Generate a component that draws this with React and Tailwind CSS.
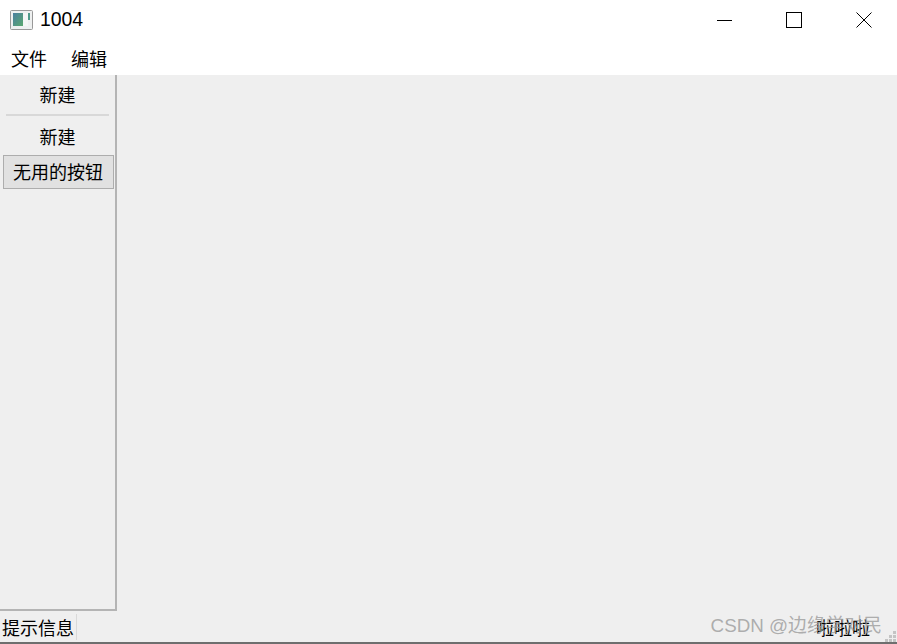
import React from "react";

const cjk = "font-['Liberation_Sans','Noto_Sans_CJK_SC',sans-serif]";

function AppIcon() {
  return (
    <svg width="23" height="20" viewBox="0 0 23 20" className="shrink-0">
      <defs>
        <linearGradient id="pane" x1="0" y1="0" x2="1" y2="1">
          <stop offset="0" stopColor="#4a7fa0" />
          <stop offset="1" stopColor="#5aa86f" />
        </linearGradient>
      </defs>
      <rect x="0.5" y="0.5" width="22" height="19" rx="1" fill="#eef0f0" stroke="#999999" />
      <rect x="3" y="3" width="10" height="13" fill="url(#pane)" />
      <rect x="18" y="3" width="2" height="7" fill="#4f9a8a" />
      <rect x="13" y="3" width="5" height="13" fill="#f4f6f5" />
    </svg>
  );
}

function TitleBar() {
  return (
    <div className="flex h-10 items-center bg-white pl-[10px]">
      <AppIcon />
      <span className="ml-[7px] text-[19.4px] text-black">1004</span>
      <div className="ml-auto flex items-center">
        <svg width="16" height="16" viewBox="0 0 16 16" className="mr-[54px]">
          <path d="M1 8.5H16" stroke="#000" fill="none" />
        </svg>
        <svg width="16" height="16" viewBox="0 0 16 16" className="mr-[54px]">
          <rect x="0.5" y="0.5" width="15" height="15" stroke="#000" fill="none" />
        </svg>
        <svg width="16" height="16" viewBox="0 0 16 16" className="mr-[25px]">
          <path d="M0.5 0.5L15.5 15.5M15.5 0.5L0.5 15.5" stroke="#000" fill="none" />
        </svg>
      </div>
    </div>
  );
}

function MenuBar() {
  return (
    <div className="flex h-[35px] items-center gap-6 bg-white pl-[11px] pt-[5px] text-[18px] text-black">
      <span>文件</span>
      <span>编辑</span>
    </div>
  );
}

function ToolBox() {
  return (
    <aside className="flex h-full w-[117px] shrink-0 flex-col items-center border-r-2 border-b-2 border-[#b4b4b4] pt-[1px] text-[18px] text-black">
      <div className="flex h-[38px] items-center pt-[3px]">新建</div>
      <div className="h-[2px] w-[103px] bg-[#d8d8d8]" />
      <div className="flex h-[39px] items-center pt-[5px]">新建</div>
      <button className="ml-[1px] h-[34px] w-[111px] border border-[#adadad] bg-[#e1e1e1] pt-[2px] text-[18px]">无用的按钮</button>
    </aside>
  );
}

function StatusBar() {
  return (
    <div className="relative flex h-[33px] items-center border-b-2 border-[#6e6e6e] text-[18px] text-black">
      <span className="flex h-[26px] items-center border-r border-[#d9d9d9] px-[2px] pt-[6px]">提示信息</span>
      <span className="ml-auto mr-[27px] pt-[6px]">啦啦啦</span>
      {/* watermark sits over the status bar */}
      <span className="absolute right-[15px] top-[1px] text-[18.8px] text-[#9b9b9b]/80">CSDN @边缘学对民</span>
      <div className="absolute bottom-0 right-[1px] grid grid-cols-3 gap-[1px]">
        <i className="h-[3px] w-[3px]" />
        <i className="h-[3px] w-[3px]" />
        <i className="h-[3px] w-[3px] bg-[#c4c4c4]" />
        <i className="h-[3px] w-[3px]" />
        <i className="h-[3px] w-[3px] bg-[#c4c4c4]" />
        <i className="h-[3px] w-[3px] bg-[#c4c4c4]" />
        <i className="h-[3px] w-[3px] bg-[#c4c4c4]" />
        <i className="h-[3px] w-[3px] bg-[#c4c4c4]" />
        <i className="h-[3px] w-[3px] bg-[#c4c4c4]" />
      </div>
    </div>
  );
}

export default function App() {
  return (
    <div className={`flex h-[644px] w-[897px] flex-col overflow-hidden bg-[#efefef] ${cjk}`}>
      <TitleBar />
      <MenuBar />
      <div className="min-h-0 flex-1">
        <ToolBox />
      </div>
      <StatusBar />
    </div>
  );
}
